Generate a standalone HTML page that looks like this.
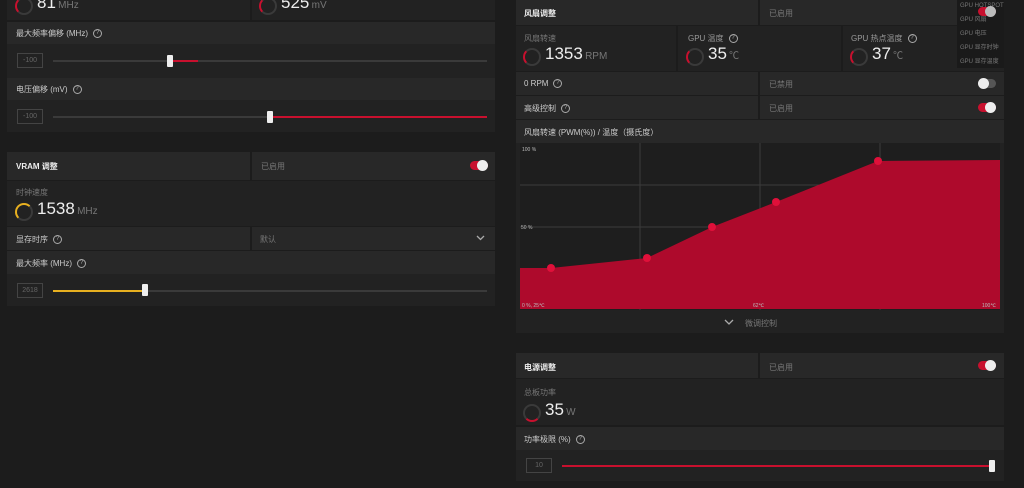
<!DOCTYPE html><html><head><meta charset="utf-8"><style>
*{margin:0;padding:0;box-sizing:border-box}
body{width:1024px;height:488px;background:#1c1c1c;font-family:"Liberation Sans","Noto Sans CJK SC",sans-serif;color:#ddd;position:relative;overflow:hidden;font-size:8px}
.a{position:absolute}
.p{background:#222}
.l{background:#282828}
.t{font-size:8px;color:#ccc}
.m{color:#777;font-size:8px}
.q{display:inline-block;width:9px;height:9px;border:1px solid #aaa;border-radius:50%;font-size:6px;text-align:center;line-height:7px;color:#aaa;margin-left:5px;vertical-align:middle}
.big{font-size:17px;color:#eee}
.u{font-size:10px;color:#777}
.g{display:inline-block;width:18px;height:18px;border-radius:50%;border:2px solid #3a3a3a;vertical-align:middle;margin-right:4px}
.box{border:1px solid #444;color:#666;font-size:7px;text-align:center;line-height:13px;width:26px;height:15px}
.tr{height:2px;background:#3a3a3a}
.th{width:6px;height:12px;background:#eee;border-radius:1px}
.tg{width:18px;height:9px;border-radius:5px;background:#c8102e}
.tg i{position:absolute;right:0;top:-1px;width:11px;height:11px;border-radius:50%;background:#eee}
</style></head><body>
<div class="a p" style="left:7px;top:0;width:243px;height:20px"></div>
<div class="a p" style="left:252px;top:0;width:243px;height:20px"></div>
<div class="a" style="left:15px;top:-7px"><span class="g" style="border-left-color:#c8102e"></span><span class="big">81</span> <span class="u">MHz</span></div>
<div class="a" style="left:259px;top:-7px"><span class="g" style="border-left-color:#c8102e"></span><span class="big">525</span> <span class="u">mV</span></div>
<div class="a l" style="left:7px;top:22px;width:488px;height:22px"></div>
<div class="a t" style="left:16px;top:28px">最大频率偏移 (MHz)<span class="q">?</span></div>
<div class="a p" style="left:7px;top:44px;width:488px;height:34px"></div>
<div class="a box" style="left:17px;top:53px">-100</div>
<div class="a tr" style="left:53px;top:60px;width:434px"></div>
<div class="a" style="left:170px;top:60px;width:28px;height:2px;background:#c8102e"></div>
<div class="a th" style="left:167px;top:55px"></div>
<div class="a l" style="left:7px;top:78px;width:488px;height:22px"></div>
<div class="a t" style="left:16px;top:84px">电压偏移 (mV)<span class="q">?</span></div>
<div class="a p" style="left:7px;top:100px;width:488px;height:32px"></div>
<div class="a box" style="left:17px;top:109px">-100</div>
<div class="a tr" style="left:53px;top:116px;width:434px"></div>
<div class="a" style="left:270px;top:116px;width:217px;height:2px;background:#c8102e"></div>
<div class="a th" style="left:267px;top:111px"></div>
<div class="a l" style="left:7px;top:152px;width:243px;height:28px"></div>
<div class="a l" style="left:252px;top:152px;width:243px;height:28px"></div>
<div class="a" style="left:16px;top:161px;font-weight:bold;font-size:8px;color:#eee">VRAM 调整</div>
<div class="a m" style="left:261px;top:161px">已启用</div>
<div class="a tg" style="left:470px;top:161px"><i></i></div>
<div class="a p" style="left:7px;top:181px;width:488px;height:45px"></div>
<div class="a m" style="left:16px;top:187px">时钟速度</div>
<div class="a" style="left:15px;top:199px"><span class="g" style="border-left-color:#e8b020;border-top-color:#e8b020"></span><span class="big">1538</span> <span class="u">MHz</span></div>
<div class="a l" style="left:7px;top:227px;width:243px;height:23px"></div>
<div class="a l" style="left:252px;top:227px;width:243px;height:23px"></div>
<div class="a t" style="left:16px;top:234px">显存时序<span class="q">?</span></div>
<div class="a m" style="left:260px;top:234px">默认</div>
<svg class="a" style="left:476px;top:235px" width="9" height="6"><path d="M1 1L4.5 4.5L8 1" stroke="#aaa" stroke-width="1.3" fill="none"/></svg>
<div class="a l" style="left:7px;top:251px;width:488px;height:23px"></div>
<div class="a t" style="left:16px;top:258px">最大频率 (MHz)<span class="q">?</span></div>
<div class="a p" style="left:7px;top:274px;width:488px;height:32px"></div>
<div class="a box" style="left:17px;top:283px">2618</div>
<div class="a tr" style="left:53px;top:290px;width:434px"></div>
<div class="a" style="left:53px;top:290px;width:92px;height:2px;background:#e8b020"></div>
<div class="a th" style="left:142px;top:284px"></div>
<div class="a l" style="left:516px;top:0;width:242px;height:25px"></div>
<div class="a l" style="left:760px;top:0;width:244px;height:25px"></div>
<div class="a" style="left:524px;top:8px;font-weight:bold;color:#eee">风扇调整</div>
<div class="a m" style="left:769px;top:8px">已启用</div>
<div class="a p" style="left:516px;top:26px;width:160px;height:45px"></div>
<div class="a p" style="left:678px;top:26px;width:163px;height:45px"></div>
<div class="a p" style="left:843px;top:26px;width:161px;height:45px"></div>
<div class="a m" style="left:524px;top:33px">风扇转速</div>
<div class="a" style="left:523px;top:44px"><span class="g" style="border-left-color:#c8102e"></span><span class="big">1353</span> <span class="u">RPM</span></div>
<div class="a m" style="left:688px;top:33px;color:#999">GPU 温度<span class="q">?</span></div>
<div class="a" style="left:686px;top:44px"><span class="g" style="border-left-color:#c8102e"></span><span class="big">35</span> <span class="u">℃</span></div>
<div class="a m" style="left:851px;top:33px;color:#999">GPU 热点温度<span class="q">?</span></div>
<div class="a" style="left:850px;top:44px"><span class="g" style="border-left-color:#c8102e"></span><span class="big">37</span> <span class="u">℃</span></div>
<div class="a" style="left:957px;top:0;width:47px;height:68px;background:#1a1a1a"></div>
<div class="a" style="left:960px;top:-1px;font-size:6px;color:#777;line-height:14px">GPU HOTSPOT<br>GPU 风扇<br>GPU 电压<br>GPU 显存时钟<br>GPU 显存温度</div>
<div class="a tg" style="left:978px;top:7px"><i style="background:#bbb"></i></div>
<div class="a l" style="left:516px;top:72px;width:242px;height:23px"></div>
<div class="a l" style="left:760px;top:72px;width:244px;height:23px"></div>
<div class="a t" style="left:524px;top:79px">0 RPM<span class="q">?</span></div>
<div class="a m" style="left:769px;top:79px">已禁用</div>
<div class="a tg" style="left:978px;top:79px;background:#555"><i style="left:0;right:auto"></i></div>
<div class="a l" style="left:516px;top:96px;width:242px;height:23px"></div>
<div class="a l" style="left:760px;top:96px;width:244px;height:23px"></div>
<div class="a t" style="left:524px;top:103px">高级控制<span class="q">?</span></div>
<div class="a m" style="left:769px;top:103px">已启用</div>
<div class="a tg" style="left:978px;top:103px"><i></i></div>
<div class="a l" style="left:516px;top:120px;width:488px;height:23px"></div>
<div class="a t" style="left:524px;top:127px">风扇转速 (PWM(%)) / 温度（摄氏度）</div>
<div class="a p" style="left:516px;top:143px;width:488px;height:190px"></div>
<svg class="a" style="left:0;top:0" width="1024" height="488">
<rect x="520" y="143" width="480" height="167" fill="#1e1e1e"/>
<g stroke="#3c3c3c" stroke-width="1"><line x1="640" y1="143" x2="640" y2="310"/><line x1="760" y1="143" x2="760" y2="310"/><line x1="880" y1="143" x2="880" y2="310"/><line x1="520" y1="185" x2="1000" y2="185"/><line x1="520" y1="227" x2="1000" y2="227"/></g>
<polygon points="520,268 551,268 647,258 712,227 776,202 878,161 1000,160 1000,309 520,309" fill="#ae0a2c"/>
<g fill="#e0103a"><circle cx="551" cy="268" r="4"/><circle cx="647" cy="258" r="4"/><circle cx="712" cy="227" r="4"/><circle cx="776" cy="202" r="4"/><circle cx="878" cy="161" r="4"/></g>
<g font-size="5" fill="#bbb" font-family="Liberation Sans"><text x="522" y="151">100 %</text><text x="521" y="229">50 %</text><text x="522" y="307">0 %, 25℃</text><text x="753" y="307">62℃</text><text x="982" y="307">100℃</text></g>
<path d="M725 320L729 324L733 320" stroke="#aaa" stroke-width="1.3" fill="none"/>
</svg>
<div class="a m" style="left:745px;top:318px">微调控制</div>
<div class="a l" style="left:516px;top:353px;width:242px;height:25px"></div>
<div class="a l" style="left:760px;top:353px;width:244px;height:25px"></div>
<div class="a" style="left:524px;top:362px;font-weight:bold;color:#eee">电源调整</div>
<div class="a m" style="left:769px;top:362px">已启用</div>
<div class="a tg" style="left:978px;top:361px"><i></i></div>
<div class="a p" style="left:516px;top:379px;width:488px;height:46px"></div>
<div class="a m" style="left:524px;top:387px">总板功率</div>
<div class="a" style="left:523px;top:400px"><span class="g" style="border-bottom-color:#c8102e"></span><span class="big">35</span> <span class="u">W</span></div>
<div class="a l" style="left:516px;top:427px;width:488px;height:23px"></div>
<div class="a t" style="left:524px;top:434px">功率极限 (%)<span class="q">?</span></div>
<div class="a p" style="left:516px;top:450px;width:488px;height:31px"></div>
<div class="a box" style="left:526px;top:458px">10</div>
<div class="a" style="left:562px;top:465px;width:430px;height:2px;background:#c8102e"></div>
<div class="a th" style="left:989px;top:460px"></div>
</body></html>
